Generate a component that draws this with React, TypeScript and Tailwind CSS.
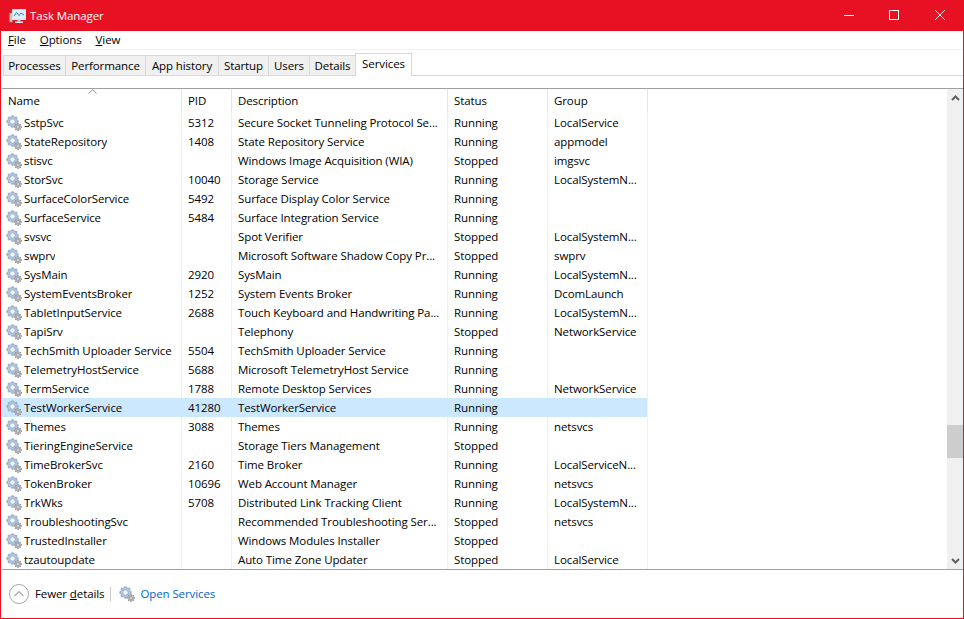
import React from 'react';

type Row = { name: string; pid: string; desc: string; status: string; group: string; selected?: boolean };

const ROWS: Row[] = [
  { name: 'SstpSvc', pid: '5312', desc: 'Secure Socket Tunneling Protocol Se...', status: 'Running', group: 'LocalService' },
  { name: 'StateRepository', pid: '1408', desc: 'State Repository Service', status: 'Running', group: 'appmodel' },
  { name: 'stisvc', pid: '', desc: 'Windows Image Acquisition (WIA)', status: 'Stopped', group: 'imgsvc' },
  { name: 'StorSvc', pid: '10040', desc: 'Storage Service', status: 'Running', group: 'LocalSystemN...' },
  { name: 'SurfaceColorService', pid: '5492', desc: 'Surface Display Color Service', status: 'Running', group: '' },
  { name: 'SurfaceService', pid: '5484', desc: 'Surface Integration Service', status: 'Running', group: '' },
  { name: 'svsvc', pid: '', desc: 'Spot Verifier', status: 'Stopped', group: 'LocalSystemN...' },
  { name: 'swprv', pid: '', desc: 'Microsoft Software Shadow Copy Pr...', status: 'Stopped', group: 'swprv' },
  { name: 'SysMain', pid: '2920', desc: 'SysMain', status: 'Running', group: 'LocalSystemN...' },
  { name: 'SystemEventsBroker', pid: '1252', desc: 'System Events Broker', status: 'Running', group: 'DcomLaunch' },
  { name: 'TabletInputService', pid: '2688', desc: 'Touch Keyboard and Handwriting Pa...', status: 'Running', group: 'LocalSystemN...' },
  { name: 'TapiSrv', pid: '', desc: 'Telephony', status: 'Stopped', group: 'NetworkService' },
  { name: 'TechSmith Uploader Service', pid: '5504', desc: 'TechSmith Uploader Service', status: 'Running', group: '' },
  { name: 'TelemetryHostService', pid: '5688', desc: 'Microsoft TelemetryHost Service', status: 'Running', group: '' },
  { name: 'TermService', pid: '1788', desc: 'Remote Desktop Services', status: 'Running', group: 'NetworkService' },
  { name: 'TestWorkerService', pid: '41280', desc: 'TestWorkerService', status: 'Running', group: '', selected: true },
  { name: 'Themes', pid: '3088', desc: 'Themes', status: 'Running', group: 'netsvcs' },
  { name: 'TieringEngineService', pid: '', desc: 'Storage Tiers Management', status: 'Stopped', group: '' },
  { name: 'TimeBrokerSvc', pid: '2160', desc: 'Time Broker', status: 'Running', group: 'LocalServiceN...' },
  { name: 'TokenBroker', pid: '10696', desc: 'Web Account Manager', status: 'Running', group: 'netsvcs' },
  { name: 'TrkWks', pid: '5708', desc: 'Distributed Link Tracking Client', status: 'Running', group: 'LocalSystemN...' },
  { name: 'TroubleshootingSvc', pid: '', desc: 'Recommended Troubleshooting Ser...', status: 'Stopped', group: 'netsvcs' },
  { name: 'TrustedInstaller', pid: '', desc: 'Windows Modules Installer', status: 'Stopped', group: '' },
  { name: 'tzautoupdate', pid: '', desc: 'Auto Time Zone Updater', status: 'Stopped', group: 'LocalService' },
];

const TABS = [
  { label: 'Processes', w: 'w-[63px]' },
  { label: 'Performance', w: 'w-[81px]' },
  { label: 'App history', w: 'w-[74px]' },
  { label: 'Startup', w: 'w-[51px]' },
  { label: 'Users', w: 'w-[42px]' },
  { label: 'Details', w: 'w-[47px]' },
];

const GearIcon = ({ size = 16 }: { size?: number }) => {
  const teeth = [0, 45, 90, 135];
  return (
    <svg width={size} height={size} viewBox="0 0 16 16" className="shrink-0">
      <g transform="translate(6.5 6.5)">
        {teeth.map((a) => (
          <rect key={a} x="-6.2" y="-1.2" width="12.4" height="2.4" fill="#9db5d2" transform={`rotate(${a})`} />
        ))}
        <circle r="4.9" fill="#b4c9e2" />
        <circle r="4.9" fill="none" stroke="#86a0c0" strokeWidth="0.6" />
        <circle r="2.7" fill="#f8fafd" stroke="#8ba0ba" strokeWidth="0.8" />
      </g>
      <g transform="translate(12 12)">
        {teeth.map((a) => (
          <rect key={a} x="-3.9" y="-0.8" width="7.8" height="1.6" fill="#8e9196" transform={`rotate(${a})`} />
        ))}
        <circle r="2.9" fill="#aeb1b5" />
        <circle r="1.3" fill="#f2f4f6" stroke="#7c7f83" strokeWidth="0.5" />
      </g>
    </svg>
  );
};

const AppIcon = () => (
  <svg width="17" height="16" viewBox="0 0 17 16" className="shrink-0">
    <rect x="0.5" y="5" width="3" height="9" fill="#b9c7b8" stroke="#7d8f86" strokeWidth="0.6" />
    <rect x="3.5" y="1.5" width="13" height="10" fill="#dfeefa" stroke="#dfe3e6" />
    <path d="M5 8 L7.5 4.5 L10 7.5 L12 5 L15 7" fill="none" stroke="#2f7fd0" strokeWidth="1" />
    <rect x="8.5" y="11.5" width="3" height="2" fill="#c8ccd0" />
    <rect x="6" y="13.5" width="8" height="1.5" fill="#e4e6e8" />
  </svg>
);

const ChevronUp = () => (
  <svg width="9" height="6" viewBox="0 0 9 6">
    <path d="M1 5 L4.5 1.5 L8 5" fill="none" stroke="#606060" strokeWidth="2" />
  </svg>
);

const ChevronDown = () => (
  <svg width="9" height="6" viewBox="0 0 9 6">
    <path d="M1 1 L4.5 4.5 L8 1" fill="none" stroke="#606060" strokeWidth="2" />
  </svg>
);

const HeaderCell = ({ className, children }: { className: string; children: React.ReactNode }) => (
  <div className={`${className} h-full flex items-center border-r border-[#e5e5e5] box-border`}>{children}</div>
);

const Cell = ({ className, selected, children }: { className: string; selected?: boolean; children: React.ReactNode }) => (
  <div className={`${className} h-full flex items-center whitespace-nowrap overflow-hidden border-r box-border ${selected ? 'border-[#d5e6f5]' : 'border-[#f0f0f0]'}`}>{children}</div>
);

const App: React.FC = () => {
  return (
    <div className="w-[964px] h-[619px] flex flex-col bg-white border border-t-0 border-[#e81123] text-[11.5px] tracking-[-0.1px] text-black font-['Open_Sans','Noto_Sans',sans-serif] overflow-hidden">
      {/* title bar */}
      <div className="h-[31px] shrink-0 bg-[#e81123] flex items-center text-white">
        <div className="flex items-center gap-[4px] pl-[8px] pt-px">
          <AppIcon />
          <span>Task Manager</span>
        </div>
        <div className="ml-auto flex items-center">
          <div className="w-[46px] h-[31px] flex items-center justify-center pl-px pb-px">
            <svg width="10" height="10" viewBox="0 0 10 10"><path d="M0 5.5H10" stroke="#fff" strokeWidth="1" /></svg>
          </div>
          <div className="w-[46px] h-[31px] flex items-center justify-center pb-px">
            <svg width="10" height="10" viewBox="0 0 10 10"><rect x="0.5" y="0.5" width="9" height="9" fill="none" stroke="#fff" /></svg>
          </div>
          <div className="w-[46px] h-[31px] flex items-center justify-center pb-px">
            <svg width="10" height="10" viewBox="0 0 10 10"><path d="M0 0L10 10M10 0L0 10" stroke="#fff" strokeWidth="1" /></svg>
          </div>
        </div>
      </div>

      {/* menu */}
      <div className="h-[18px] shrink-0 flex items-center gap-[14px] pl-[7px] border-b border-[#f0f0f0] box-content">
        <span><u>F</u>ile</span>
        <span><u>O</u>ptions</span>
        <span><u>V</u>iew</span>
      </div>

      {/* tabs */}
      <div className="h-[25px] shrink-0 flex items-end ml-[2px] border-b border-[#d9d9d9] box-content">
        {TABS.map((t) => (
          <div key={t.label} className={`${t.w} h-[20px] flex items-center justify-center bg-[#f0f0f0] border border-b-0 border-[#d9d9d9] -mr-px box-border`}>
            {t.label}
          </div>
        ))}
        <div className="w-[57px] h-[23px] flex items-center justify-center bg-white border border-b-0 border-[#d9d9d9] -mb-px pb-[3px] relative">
          Services
        </div>
      </div>

      {/* list */}
      <div className="mt-[12px] ml-px h-[482px] shrink-0 flex border-t border-b border-[#a0a0a0]">
        <div className="flex-1 min-w-0 flex flex-col">
          <div className="h-[24px] shrink-0 flex items-center">
            <HeaderCell className="w-[180px] pl-[6px] relative">
              Name
              <span className="absolute left-[86px] top-0 leading-none"><svg width="9" height="5" viewBox="0 0 9 5"><path d="M0.5 4.5 L4.5 0.8 L8.5 4.5" fill="none" stroke="#8a8a8a" /></svg></span>
            </HeaderCell>
            <HeaderCell className="w-[50px] pl-[6px]">PID</HeaderCell>
            <HeaderCell className="w-[216px] pl-[6px]">Description</HeaderCell>
            <HeaderCell className="w-[100px] pl-[6px]">Status</HeaderCell>
            <HeaderCell className="w-[100px] pl-[6px]">Group</HeaderCell>
          </div>
          {ROWS.map((r) => (
            <div key={r.name} className="h-[19px] w-[646px] shrink-0 flex">
              <div className={`flex-1 flex ${r.selected ? 'bg-[#cce8ff]' : ''}`}>
                <Cell selected={r.selected} className="w-[180px] pl-[4px] gap-[2px]"><GearIcon /><span className="truncate">{r.name}</span></Cell>
                <Cell selected={r.selected} className="w-[50px] pl-[6px]">{r.pid}</Cell>
                <Cell selected={r.selected} className="w-[216px] pl-[6px]">{r.desc}</Cell>
                <Cell selected={r.selected} className="w-[100px] pl-[6px]">{r.status}</Cell>
                <div className="w-[99px] h-full pl-[6px] flex items-center whitespace-nowrap overflow-hidden">{r.group}</div>
              </div>
              <div className="w-px shrink-0 bg-[#f0f0f0]" />
            </div>
          ))}
        </div>
        {/* scrollbar */}
        <div className="w-[16px] shrink-0 bg-[#f0f0f0] flex flex-col items-center">
          <div className="h-[17px] flex items-center justify-center"><ChevronUp /></div>
          <div className="flex-1 w-full pt-[319px]">
            <div className="h-[33px] bg-[#cdcdcd]" />
          </div>
          <div className="h-[17px] flex items-center justify-center"><ChevronDown /></div>
        </div>
      </div>

      {/* footer */}
      <div className="flex-1 flex items-center pl-[8px] pb-px">
        <svg width="20" height="20" viewBox="0 0 20 20" className="shrink-0">
          <circle cx="10" cy="10" r="9.5" fill="#fff" stroke="#a6a6a6" />
          <path d="M5.5 12 L10 7.5 L14.5 12" fill="none" stroke="#a6a6a6" strokeWidth="1.2" />
        </svg>
        <span className="ml-[6px]">Fewer <u>d</u>etails</span>
        <div className="w-px h-[14px] bg-[#c8c8c8] ml-[6px]" />
        <div className="ml-[8px]"><GearIcon /></div>
        <span className="ml-[5px] text-[#0066cc]">Open Services</span>
      </div>
    </div>
  );
};

export default App;
